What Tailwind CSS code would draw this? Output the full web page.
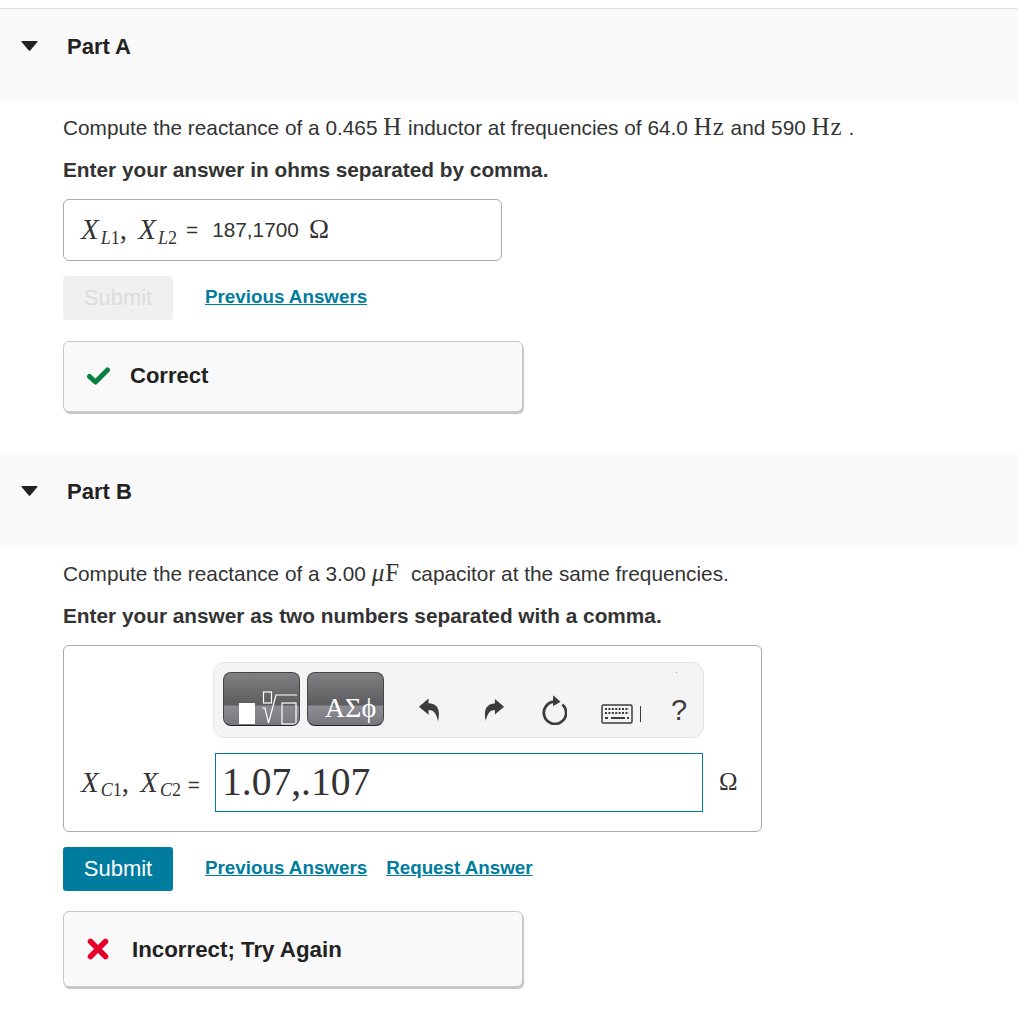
<!DOCTYPE html>
<html lang="en">
<head>
  <meta charset="UTF-8" />
  <title>Part A and Part B</title>
  <script src="https://cdn.jsdelivr.net/npm/@tailwindcss/browser@4"></script>
</head>
<body class="bg-white text-[#333] text-[20.8px] font-['Liberation_Sans',Arial,sans-serif]">

  <div class="pt-2 w-[1018px] h-[1022px] overflow-hidden">

    <!-- Part A -->
    <div class="h-[92px] bg-[#f9f9f9] border-t border-[#e0e0e0] flex items-start pt-[24px]">
      <svg class="ml-[21px] mt-[8px] w-[17px] h-[10px]" viewBox="0 0 17 10"><path d="M1 0H16Q17 0 16.400 1L9.200 9.500Q8.500 10 7.800 9.500L.6 1Q0 0 1 0Z" fill="#222"/></svg>
      <span class="ml-[29px] font-bold text-[22px] text-[#222] leading-[28px]">Part A</span>
    </div>

    <div class="pl-[63px]">
      <p class="mt-[13px] h-[28px] leading-[28px] whitespace-nowrap">Compute the reactance of a 0.465 <span class="font-['Liberation_Serif',serif] text-[25px] tracking-[1px]">H</span> inductor at frequencies of 64.0 <span class="font-['Liberation_Serif',serif] text-[25px] tracking-[1px]">Hz</span> and 590 <span class="font-['Liberation_Serif',serif] text-[25px] tracking-[1px]">Hz</span> .</p>
      <p class="mt-[15px] h-[28px] leading-[28px] font-bold">Enter your answer in ohms separated by comma.</p>

      <div class="mt-[15px] w-[439px] h-[62px] border border-[#aaa] rounded-[6px] flex items-center pl-[17px]">
        <span class="font-['Liberation_Serif',serif] text-[29px] italic whitespace-nowrap tracking-[2px]">X<sub class="text-[18px] tracking-normal">L<span class="not-italic">1</span></sub><span class="not-italic">,</span> X<sub class="text-[18px] tracking-normal">L<span class="not-italic">2</span></sub></span>
        <span class="ml-[9px]">=</span>
        <span class="ml-[14px]">187,1700</span>
        <span class="ml-[10px] mb-[2px] font-['Liberation_Serif',serif] text-[27px]">Ω</span>
      </div>

      <div class="mt-[15px] flex items-center">
        <button class="w-[110px] h-[44px] pb-[2px] rounded-[3px] bg-[#f0f0f0] text-[#dcdcdc] text-[22px]">Submit</button>
        <a href="#" class="ml-[32px] mb-[1px] font-bold text-[18.8px] text-[#007c9e] underline">Previous Answers</a>
      </div>

      <div class="mt-[21px] w-[460px] h-[71px] pb-[2px] bg-[#f9f9f9] border border-[#c8c8c8] rounded-[6px] shadow-[1px_2px_1px_#c4c4c4] flex items-center pl-[23px]">
        <svg class="w-[23px] h-[18px]" viewBox="0 0 23 18"><path d="M2.500 9.500L8.500 15L20.500 3" fill="none" stroke="#0a8043" stroke-width="5" stroke-linecap="round" stroke-linejoin="round"/></svg>
        <span class="ml-[20px] font-bold text-[22px] text-[#222]">Correct</span>
      </div>
    </div>

    <!-- Part B -->
    <div class="mt-[43px] h-[90px] bg-[#f9f9f9] flex items-start pt-[23px]">
      <svg class="ml-[21px] mt-[8px] w-[17px] h-[10px]" viewBox="0 0 17 10"><path d="M1 0H16Q17 0 16.400 1L9.200 9.500Q8.500 10 7.800 9.500L.6 1Q0 0 1 0Z" fill="#222"/></svg>
      <span class="ml-[29px] font-bold text-[22px] text-[#222] leading-[28px]">Part B</span>
    </div>

    <div class="pl-[63px]">
      <p class="mt-[14px] h-[28px] leading-[28px] whitespace-nowrap">Compute the reactance of a 3.00 <span class="mr-[5px] font-['Liberation_Serif',serif] text-[25px] tracking-[1px]"><i>μ</i>F</span> capacitor at the same frequencies.</p>
      <p class="mt-[15px] h-[28px] leading-[28px] font-bold">Enter your answer as two numbers separated with a comma.</p>

      <div class="mt-[15px] w-[699px] h-[187px] border border-[#aaa] rounded-[6px] pt-[16px] pl-[17px]">
        <!-- toolbar -->
        <div class="relative ml-[132px] w-[491px] h-[76px] bg-[#f4f4f4] border border-[#e2e2e2] rounded-[12px] flex items-start pl-[9px] pt-[9px]">
          <div class="w-[77px] h-[54px] rounded-[8px] border border-[#444] border-b-[#222] bg-[linear-gradient(#808084_0,#5c5c5e_62%,#8c8c94_63%,#77777c_100%)] relative overflow-hidden">
            <div class="absolute left-[15px] top-[30px] w-[16px] h-[21px] bg-white"></div>
            <svg class="absolute left-[37px] top-[18px] w-[38px] h-[36px]" viewBox="0 0 38 36" fill="none" stroke="#fff" stroke-width="1.200">
              <rect x="2.500" y="1" width="8" height="11"/>
              <path d="M1 17H4L7.500 32L15 4H36"/>
              <rect x="21" y="12" width="14" height="21"/>
            </svg>
          </div>
          <div class="ml-[7px] w-[77px] h-[54px] rounded-[8px] border border-[#444] border-b-[#222] bg-[linear-gradient(#808084_0,#5c5c5e_62%,#8c8c94_63%,#77777c_100%)] text-white font-['Liberation_Serif',serif] text-[28px] flex items-center justify-center pt-[18px] pl-[10px] leading-none">ΑΣϕ</div>
          <svg class="ml-[34px] mt-[25px] w-[23px] h-[26px]" viewBox="0 0 24 26"><path d="M1 9.500L11 1V6C19 6 24 11 21 25C19 16 16 13 11 13V18Z" fill="#3c3c3c"/></svg>
          <svg class="ml-[42px] mt-[25px] w-[22px] h-[26px]" viewBox="0 0 24 26"><path d="M23 9.500L13 1V6C5 6 0 11 3 25C5 16 8 13 13 13V18Z" fill="#3c3c3c"/></svg>
          <svg class="ml-[36px] mt-[23px] w-[26px] h-[30px]" viewBox="0 0 28 32" fill="none"><path d="M15 7A12 12 0 1 0 23 10" stroke="#3c3c3c" stroke-width="3"/><path d="M13 0L21 7L13 12Z" fill="#3c3c3c"/></svg>
          <svg class="ml-[34px] mt-[32px] w-[32px] h-[20px]" viewBox="0 0 32 20" fill="none">
            <rect x="1" y="1" width="30" height="18" rx="1.500" stroke="#3c3c3c" stroke-width="1.500"/>
            <path d="M4 5H28M4 9H28" stroke="#3c3c3c" stroke-width="2" stroke-dasharray="2 1.400"/>
            <path d="M4 14H7M10 14H24M26 14H28" stroke="#3c3c3c" stroke-width="2"/>
          </svg>
          <div class="ml-[7px] mt-[34px] w-px h-[16px] bg-[#3c3c3c]"></div>
          <span class="ml-[30px] mt-[24px] text-[#3c3c3c] text-[29px] leading-none">?</span>
          <div class="absolute right-[26px] top-[9px] w-px h-px bg-[#999]"></div>
        </div>

        <!-- answer row -->
        <div class="mt-[15px] flex items-center">
          <div class="w-[134px] whitespace-nowrap">
            <span class="font-['Liberation_Serif',serif] text-[29px] italic tracking-[2px]">X<sub class="text-[18px] tracking-normal">C<span class="not-italic">1</span></sub><span class="not-italic">,</span> X<sub class="text-[18px] tracking-normal">C<span class="not-italic">2</span></sub></span>
            <span class="ml-[1px]">=</span>
          </div>
          <div class="w-[488px] h-[59px] border border-[#007c9e] pl-[6px] flex items-center font-['Liberation_Serif',serif] text-[39.500px] text-[#333] leading-none">1.07,.107</div>
          <span class="ml-[16px] mb-[2px] font-['Liberation_Serif',serif] text-[25px]">Ω</span>
        </div>
      </div>

      <div class="mt-[15px] flex items-center">
        <button class="w-[110px] h-[44px] pb-[2px] rounded-[3px] bg-[#007c9e] text-white text-[22px]">Submit</button>
        <a href="#" class="ml-[32px] mb-[2px] font-bold text-[18.8px] text-[#007c9e] underline">Previous Answers</a>
        <a href="#" class="ml-[19px] mb-[2px] font-bold text-[18.8px] text-[#007c9e] underline">Request Answer</a>
      </div>

      <div class="mt-[20px] w-[460px] h-[76px] bg-[#f9f9f9] border border-[#c8c8c8] rounded-[6px] shadow-[1px_2px_1px_#c4c4c4] flex items-center pl-[23px]">
        <svg class="w-[22px] h-[22px]" viewBox="0 0 22 22"><path d="M3.500 3.500L18.500 18.500M18.500 3.500L3.500 18.500" stroke="#e4002b" stroke-width="5.600" stroke-linecap="round"/></svg>
        <span class="ml-[23px] mt-[2px] font-bold text-[22.3px] text-[#222]">Incorrect; Try Again</span>
      </div>
    </div>
  </div>
</body>
</html>
